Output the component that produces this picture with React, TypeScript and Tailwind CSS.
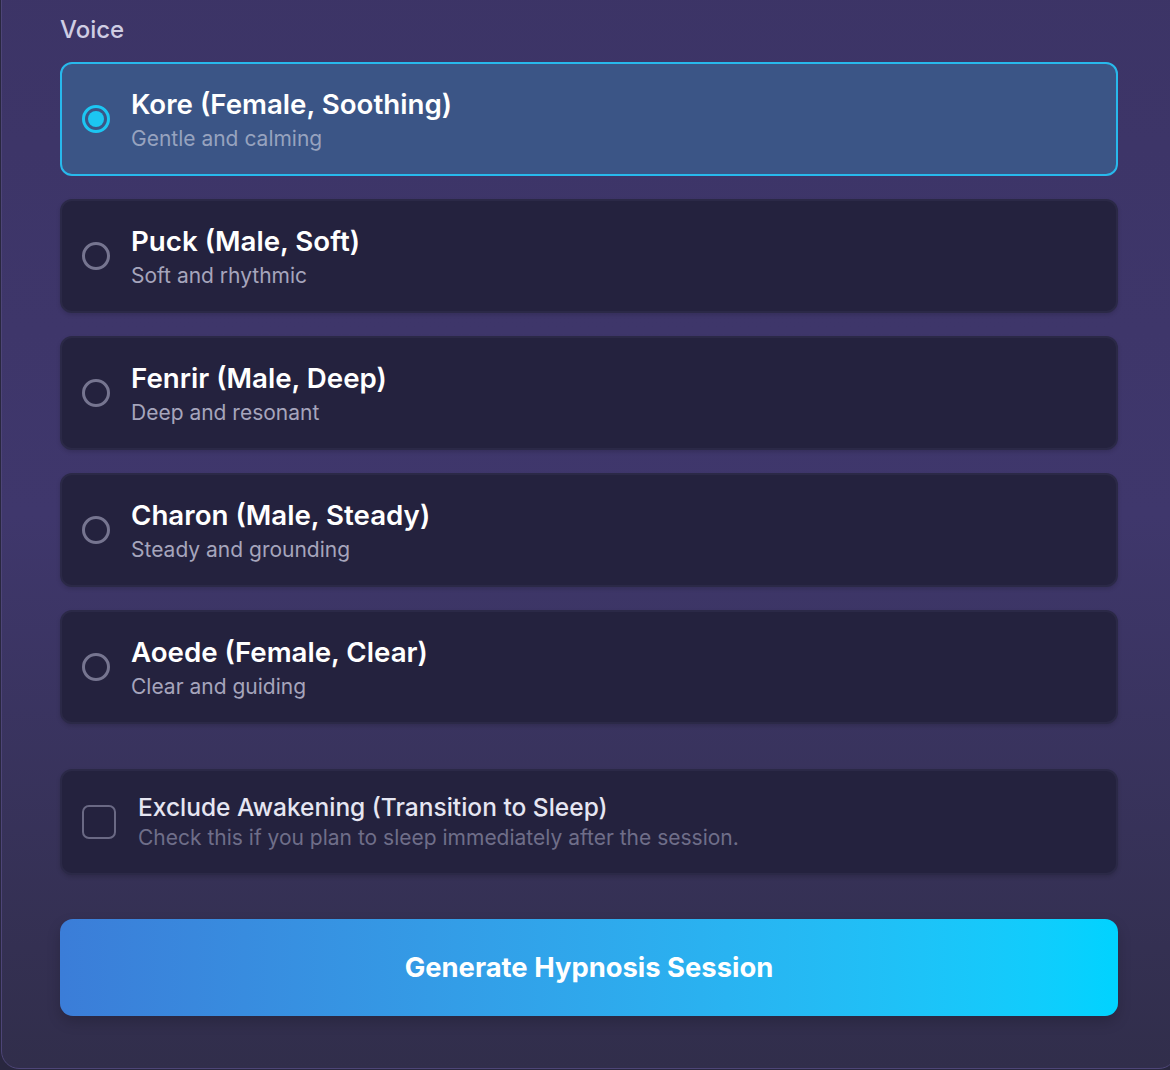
const voices = [
  { name: "Kore (Female, Soothing)", desc: "Gentle and calming" },
  { name: "Puck (Male, Soft)", desc: "Soft and rhythmic" },
  { name: "Fenrir (Male, Deep)", desc: "Deep and resonant" },
  { name: "Charon (Male, Steady)", desc: "Steady and grounding" },
  { name: "Aoede (Female, Clear)", desc: "Clear and guiding" },
];

function Radio({ checked }: { checked: boolean }) {
  if (checked) {
    return (
      <span className="flex h-[28px] w-[28px] shrink-0 items-center justify-center rounded-full border-[3px] border-[#1cc6f2]">
        <span className="h-[16px] w-[16px] rounded-full bg-[#1cc6f2]" />
      </span>
    );
  }
  return <span className="h-[28px] w-[28px] shrink-0 rounded-full border-[3px] border-[#767590]" />;
}

export default function App() {
  const selected = 0;

  return (
    <div className="h-[1070px] overflow-hidden bg-[#29273f] font-['Inter',sans-serif]">
      <div className="-mt-[40px] ml-px w-[1176px] rounded-b-[18px] border border-[#4d4577] bg-linear-to-b from-[#3c3466] via-[#3f376c] to-[#312e4b] px-[58px] pb-[52px] pt-[53px]">
        <div className="mb-[16px] text-[24px] font-medium leading-[32px] text-[#cfcde3]">Voice</div>

        {/* Voice options */}
        <div className="flex flex-col gap-[23px]">
          {voices.map((v, i) => (
            <div
              key={v.name}
              className={
                i === selected
                  ? "flex h-[114px] items-center gap-[21px] rounded-[12px] border-2 border-[#28b9ec] bg-[#3b5586] px-[20px] pt-[3px]"
                  : "flex h-[114px] items-center gap-[21px] rounded-[12px] border-2 border-[#2b2947] bg-[#24223e] px-[20px] pt-[3px] shadow-[0_2px_4px_rgba(0,0,0,0.15)]"
              }
            >
              <span className="-mt-[3px] flex">
                <Radio checked={i === selected} />
              </span>
              <div className="flex flex-col">
                <div className="text-[27.7px] font-semibold leading-[36px] text-white">{v.name}</div>
                <div className={i === selected ? "text-[21px] leading-[33px] text-[#97a3bf]" : "text-[21px] leading-[33px] text-[#a6a5bc]"}>
                  {v.desc}
                </div>
              </div>
            </div>
          ))}
        </div>

        {/* Sleep option */}
        <div className="mt-[45px] flex h-[106px] items-center gap-[22px] rounded-[12px] border-2 border-[#2b2947] bg-[#24223e] px-[20px] shadow-[0_2px_4px_rgba(0,0,0,0.15)]">
          <span className="h-[34px] w-[34px] shrink-0 rounded-[7px] border-2 border-[#6a6984]" />
          <div className="flex flex-col">
            <div className="text-[24.5px] font-medium leading-[32px] text-[#e6e6f2]">Exclude Awakening (Transition to Sleep)</div>
            <div className="text-[21px] leading-[30px] text-[#6f6e89]">Check this if you plan to sleep immediately after the session.</div>
          </div>
        </div>

        <button className="mt-[44px] flex h-[97px] w-full items-center justify-center rounded-[13px] bg-linear-to-r from-[#3b7dd8] to-[#00d3ff] text-[27.4px] font-bold text-white shadow-[0_6px_14px_rgba(0,0,0,0.18)]">
          Generate Hypnosis Session
        </button>
      </div>
    </div>
  );
}
